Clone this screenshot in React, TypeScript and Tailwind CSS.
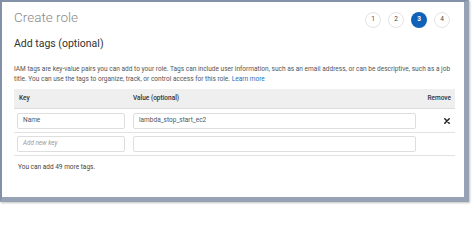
import React from "react";

const steps = [1, 2, 3, 4];

function StepDots({ active }: { active: number }) {
  return (
    <div className="flex items-center gap-[7px]">
      {steps.map((s) => (
        <div
          key={s}
          className={
            s === active
              ? "w-[16px] h-[16px] rounded-full bg-[#0f62b7] text-white flex items-center justify-center text-[6.5px] font-bold"
              : "w-[16px] h-[16px] rounded-full bg-white border border-[#e3e3e3] text-[#444] flex items-center justify-center text-[6.5px]"
          }
        >
          {s}
        </div>
      ))}
    </div>
  );
}

function RemoveIcon() {
  return (
    <svg width="6" height="6" viewBox="0 0 6 6">
      <path d="M0.8 0.8 L5.2 5.2 M5.2 0.8 L0.8 5.2" stroke="#222" strokeWidth="1.5" strokeLinecap="round" />
    </svg>
  );
}

export default function App() {
  return (
    <div className="w-[474px] h-[207px] bg-white" style={{ fontFamily: "Roboto, 'Liberation Sans', sans-serif" }}>
      <div className="w-[469px] h-[202px] border-t-2 border-l-2 border-r-[5px] border-b-[5px] border-t-[#8391a8] border-l-[#8391a8] border-r-[#97a2b5] border-b-[#97a2b5] shadow-[1px_1px_2px_rgba(0,0,0,0.25)] bg-white pl-3 pr-[12px]">
        <div className="flex items-start justify-between pt-[6px]">
          <h1 className="text-[13.5px] leading-[18px] font-light text-[#8a8a8a]">Create role</h1>
          <div className="pt-[4px] pr-[2px]">
            <StepDots active={3} />
          </div>
        </div>
        <h2 className="mt-[9px] text-[10.5px] leading-[14px] text-[#333]">Add tags (optional)</h2>
        <p className="mt-[13px] text-[6.55px] leading-[10px] text-[#555] whitespace-nowrap">
          <span className="block">
            IAM tags are key-value pairs you can add to your role. Tags can include user information, such as an email address, or can be descriptive, such as a job
          </span>
          <span className="block">
            title. You can use the tags to organize, track, or control access for this role.{" "}
            <span className="text-[#1a73c2]">Learn more</span>
          </span>
        </p>
        <div className="mt-[5px] w-[441px]">
          <div className="grid grid-cols-[115px_287px_39px] h-[20px] items-center bg-[#efefef] border-b border-[#dcdcdc] text-[6.5px] font-medium text-[#333]">
            <span className="pl-[5px]">Key</span>
            <span className="pl-[4px]">Value (optional)</span>
            <span className="text-right pr-[4px]">Remove</span>
          </div>
          <div className="grid grid-cols-[115px_287px_39px] h-[24px] items-center border-b border-[#e2e2e2]">
            <div className="pl-[3px]">
              <div className="w-[108px] h-[16px] border border-[#dedede] rounded-[2px] flex items-center pl-[5px] text-[6.5px] text-[#555]">
                Name
              </div>
            </div>
            <div className="pl-[4px]">
              <div className="h-[16px] border border-[#dedede] rounded-[2px] flex items-center pl-[5px] text-[6.5px] text-[#555]">
                lambda_stop_start_ec2
              </div>
            </div>
            <div className="flex justify-end pr-[5px]">
              <RemoveIcon />
            </div>
          </div>
          <div className="grid grid-cols-[115px_287px_39px] h-[23px] items-center border-b border-[#e2e2e2]">
            <div className="pl-[3px]">
              <div className="w-[108px] h-[16px] border border-[#dedede] rounded-[2px] flex items-center pl-[5px] text-[6.3px] italic text-[#9a9a9a]">
                Add new key
              </div>
            </div>
            <div className="pl-[4px]">
              <div className="h-[16px] border border-[#dedede] rounded-[2px]" />
            </div>
            <div />
          </div>
        </div>
        <p className="mt-[6px] pl-[4px] text-[6.5px] leading-[10px] text-[#444]">You can add 49 more tags.</p>
      </div>
    </div>
  );
}
